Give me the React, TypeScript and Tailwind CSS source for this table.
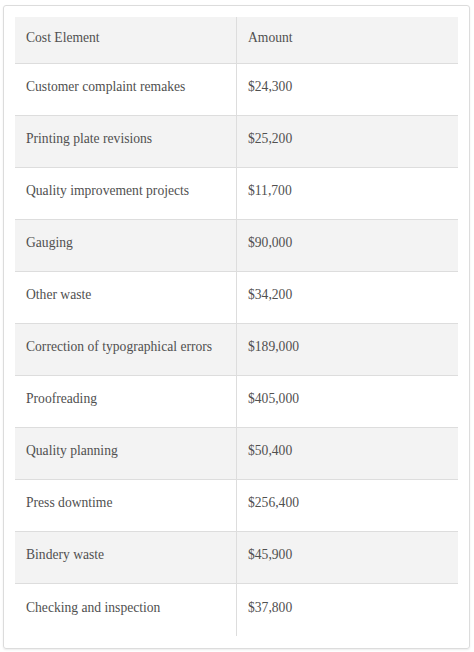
import React from "react";

const rows: [string, string][] = [
  ["Customer complaint remakes", "$24,300"],
  ["Printing plate revisions", "$25,200"],
  ["Quality improvement projects", "$11,700"],
  ["Gauging", "$90,000"],
  ["Other waste", "$34,200"],
  ["Correction of typographical errors", "$189,000"],
  ["Proofreading", "$405,000"],
  ["Quality planning", "$50,400"],
  ["Press downtime", "$256,400"],
  ["Bindery waste", "$45,900"],
  ["Checking and inspection", "$37,800"],
];

export default function App() {
  return (
    <div className="w-[474px] h-[652px] bg-white pt-[5px] pl-[3px]" style={{ fontFamily: '"Liberation Serif", serif' }}>
      <div className="w-[467px] h-[644px] border border-[#dcdcdc] rounded-[3px] shadow-[0_1px_2px_rgba(0,0,0,0.08)] p-[11px]">
        <div className="w-[443px] text-[13.6px] text-[#505050]">
          <div className="flex h-[47px] bg-[#f3f3f3] border-b border-[#dddddd]">
            <div className="w-[222px] border-r border-[#dddddd] pl-[11px] flex items-center pb-[4px]">Cost Element</div>
            <div className="flex-1 pl-[11px] flex items-center pb-[4px]">Amount</div>
          </div>
          {rows.map(([a, b], i) => (
            <div
              key={a}
              className={`flex h-[52px] ${i < rows.length - 1 ? "border-b border-[#dddddd]" : ""} ${i % 2 === 1 ? "bg-[#f3f3f3]" : "bg-white"}`}
            >
              <div className="w-[222px] border-r border-[#dddddd] pl-[11px] flex items-center pb-[4px] whitespace-nowrap">{a}</div>
              <div className="flex-1 pl-[11px] flex items-center pb-[4px]">{b}</div>
            </div>
          ))}
        </div>
      </div>
    </div>
  );
}
